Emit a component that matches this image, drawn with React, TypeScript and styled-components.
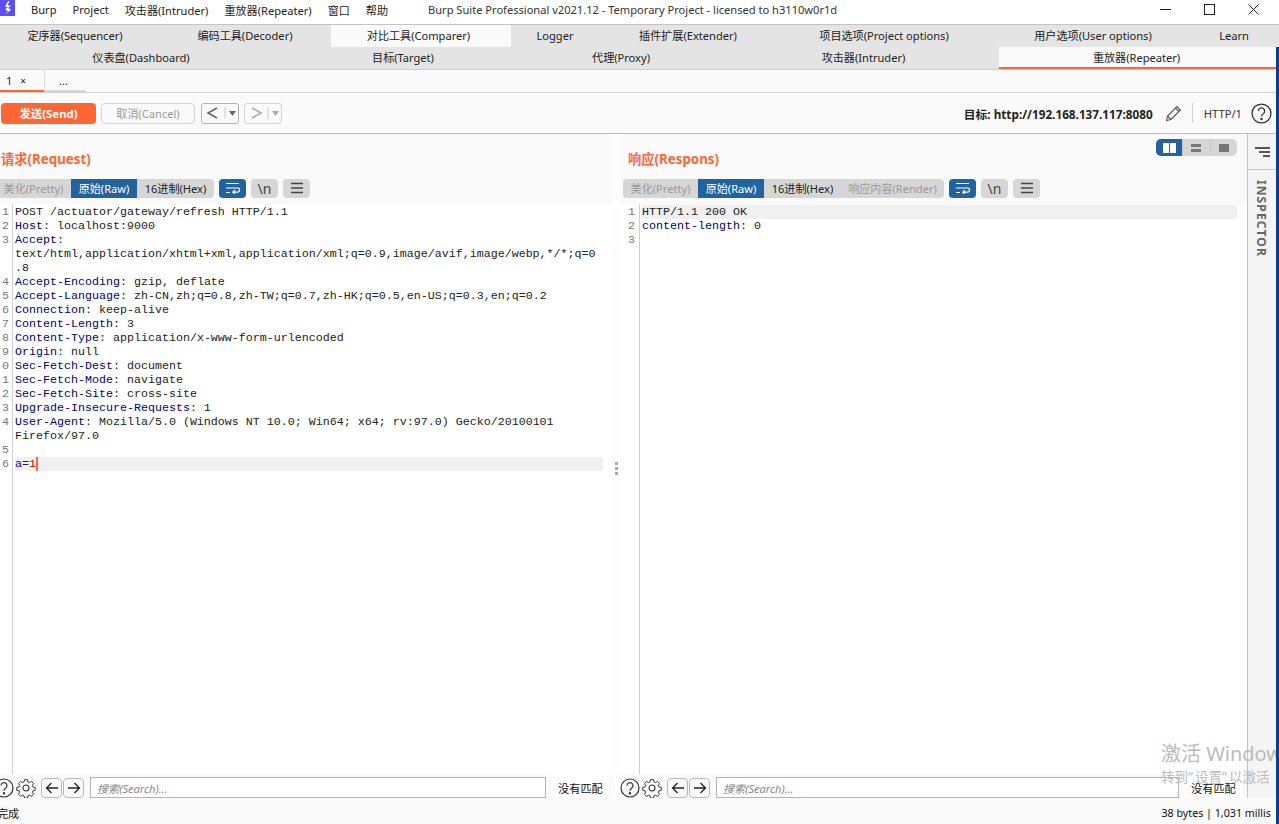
import React from "react";
import styled, { createGlobalStyle } from "styled-components";

const Global = createGlobalStyle`
  html, body { margin: 0; padding: 0; background: #fff; overflow: hidden; }
  * { box-sizing: border-box; }
  #root { width: 1279px; height: 824px; overflow: hidden; }
`;
const ui = `"Noto Sans", "Noto Sans CJK SC", sans-serif`;
const Page = styled.div`
  position: relative; width: 1279px; height: 824px; overflow: hidden;
  display: flex; flex-direction: column; font-family: ${ui}; font-size: 11.1px; color: #222; background: #fafafa;
`;
const TitleBar = styled.div`
  height: 25px; flex: none; background: #fff; border-bottom: 1px solid #c4c4c4; display: flex; align-items: flex-start; position: relative;
`;
const Logo = styled.div`width: 15px; height: 16px; flex: none; background: #5b4df0; display: flex; align-items: center; justify-content: center;`;
const Menu = styled.div`display: flex; margin: 2px 0 0 16px; gap: 16px; color: #222;`;
const AppTitle = styled.div`position: absolute; left: 428px; top: 2px; color: #333; white-space: nowrap;`;
const WindowButtons = styled.div`margin-left: auto; display: flex; padding: 4px 20px 0 0; gap: 33px; color: #222;`;
const TabRow = styled.div<{ $cols: string }>`
  height: 22px; flex: none; display: grid; grid-template-columns: ${p => p.$cols}; background: #e4e4e4;
`;
const MainTab = styled.div<{ $active?: boolean; $line?: boolean; $shift?: number }>`
  display: flex; align-items: center; justify-content: center; color: #222; white-space: nowrap;
  padding-bottom: 2px;
  padding-left: ${p => Math.max(p.$shift ?? 0, 0)}px;
  padding-right: ${p => Math.max(-(p.$shift ?? 0), 0)}px;
  background: ${p => (p.$active ? "#fafafa" : "transparent")};
  ${p => (p.$line ? "box-shadow: inset 0 -2px 0 #ff6633;" : "")}
`;
const SubTabs = styled.div`
  height: 24px; flex: none; border-top: 1px solid #cfcfcf; border-bottom: 1px solid #cfcfcf; background: #fafafa; display: flex;
`;
const SubTab = styled.div<{ $active?: boolean }>`
  width: ${p => (p.$active ? 45 : 41)}px; display: flex; align-items: center; color: #222; gap: 8px;
  height: 22px; padding-left: ${p => (p.$active ? 6 : 14)}px; padding-bottom: 1px;
  border-right: ${p => (p.$active ? "1px solid #dcdcdc" : "none")};
  box-shadow: inset 0 -2px 0 ${p => (p.$active ? "#ff6633" : "#d8d8d8")};
`;
const CloseMark = styled.span`font-size: 10px;`;
const Toolbar = styled.div`
  height: 41px; flex: none; display: flex; align-items: center; padding: 0 7px 0 1px; background: #fafafa; border-bottom: 1px solid #bdbdbd;
`;
const SendBtn = styled.div`
  width: 95px; height: 21px; background: #ff6633; color: #fff; font-weight: 700; font-size: 11.4px; border-radius: 4px; display: flex; align-items: center; justify-content: center;
`;
const CancelBtn = styled.div`
  width: 94px; height: 21px; margin-left: 5px; border: 1px solid #d4d4d4; border-radius: 4px; color: #999; display: flex; align-items: center; justify-content: center;
`;
const NavBtn = styled.div<{ $off?: boolean }>`
  width: 38px; height: 21px; margin-left: ${p => (p.$off ? 5 : 6)}px; border: 1px solid ${p => (p.$off ? "#d4d4d4" : "#b4b4b4")}; border-radius: 3px;
  display: flex; align-items: center;
`;
const Target = styled.div`margin-left: auto; font-size: 11.75px; font-weight: 700; color: #222; white-space: nowrap;`;
const PencilWrap = styled.span`display: flex; margin-left: 12px; flex: none;`;
const ToolSep = styled.div`width: 1px; height: 20px; background: #d0d0d0; margin: 0 11px 0 10px;`;
const Proto = styled.div`font-size: 11.2px; color: #333; margin-right: 9px;`;
const Work = styled.div`flex: 1; min-height: 0; display: flex; position: relative;`;
const Pane = styled.div<{ $w: number }>`position: relative; width: ${p => p.$w}px; flex: none; display: flex; flex-direction: column; background: #fafafa;`;
const PaneTitle = styled.div<{ $pad: number }>`
  height: 45px; flex: none; display: flex; align-items: center; padding-left: ${p => p.$pad}px; padding-top: 4px; color: #ff6633; font-weight: 700; font-size: 13.3px;
`;
const ViewRow = styled.div<{ $offset: number }>`height: 25px; flex: none; display: flex; align-items: flex-start; margin-left: ${p => p.$offset}px; gap: 5px;`;
const Seg = styled.div`height: 19px; display: flex; background: #d6d6d6; border-radius: 4px; overflow: hidden; flex: none;`;
const SegItem = styled.div<{ $w: number; $state: "on" | "off" | "dim" }>`
  width: ${p => p.$w}px; display: flex; align-items: center; justify-content: center; white-space: nowrap; padding-bottom: 1px;
  color: ${p => (p.$state === "on" ? "#fff" : p.$state === "dim" ? "#9a9a9a" : "#222")};
  background: ${p => (p.$state === "on" ? "#22629e" : "transparent")};
`;
const IconBtn = styled.div<{ $on?: boolean }>`
  width: 27px; height: 19px; border-radius: 4px; display: flex; align-items: center; justify-content: center; font-size: 14px; padding-bottom: 1px;
  background: ${p => (p.$on ? "#22629e" : "#d6d6d6")}; color: ${p => (p.$on ? "#fff" : "#444")};
`;
const Code = styled.div`flex: 1; min-height: 0; display: flex; background: #fff; overflow: hidden;`;
const Gutter = styled.div<{ $w: number; $pad: number }>`
  width: ${p => p.$w}px; flex: none; border-right: 1px solid #cfcfcf; padding-top: 1px; text-align: right; padding-right: ${p => p.$pad}px;
  font: 11.67px/14px "Liberation Mono", monospace; color: #777;
`;
const Lines = styled.div`flex: 1; min-width: 0; padding: 1px 0 0 2px; font: 11.67px/14px "Liberation Mono", monospace; color: #222;`;
const Line = styled.div<{ $on?: boolean; $end: number }>`
  height: 14px; white-space: pre; margin-right: ${p => p.$end}px; background: ${p => (p.$on ? "#f0f0f0" : "transparent")};
`;
const Key = styled.span`color: #000080;`;
const ParamKey = styled.span`color: #0000c0;`;
const Num = styled.span`color: #c00000;`;
const Caret = styled.span`display: inline-block; width: 2px; height: 14px; background: #ff6633; vertical-align: top;`;
const Divider = styled.div`width: 8px; flex: none; background: #fdfdfd; display: flex; flex-direction: column; align-items: center;`;
const Dots = styled.div`margin-top: 328px; display: flex; flex-direction: column; gap: 2px;`;
const Dot = styled.div`width: 3px; height: 3px; background: #aaa;`;
const SearchBar = styled.div`height: 24px; flex: none; display: flex; align-items: center; background: #fafafa; padding-top: 3px;`;
const HelpWrap = styled.span<{ $start: number }>`display: flex; margin-left: ${p => p.$start}px;`;
const GearWrap = styled.span`display: flex; margin: 0 5px 0 2px;`;
const SearchBtn = styled.div`width: 21px; height: 20px; flex: none; margin-right: 1px; border: 1px solid #b8b8b8; border-radius: 4px; display: flex; align-items: center; justify-content: center; color: #222;`;
const SearchInput = styled.div<{ $w: number }>`
  width: ${p => p.$w}px; height: 21px; flex: none; margin-left: 5px; border: 1px solid #b4b4b4; background: #fff; padding-left: 6px; font-style: italic; color: #888; display: flex; align-items: center;
`;
const NoMatch = styled.div`
  margin: -3px 0 0 5px; align-self: stretch; background: #fff; padding: 3px 6px 0 7px; color: #111; white-space: nowrap; display: flex; align-items: center; font-size: 11.2px;
`;
const LayoutSwitch = styled.div`position: absolute; right: 10px; top: 5px; height: 17px; width: 81px; display: flex; border-radius: 5px; overflow: hidden; background: #d6d6d6;`;
const LayoutItem = styled.div<{ $on?: boolean }>`
  flex: 1; display: flex; align-items: center; justify-content: center; border-right: 1px solid #c8c8c8; background: ${p => (p.$on ? "#22629e" : "transparent")};
  &:last-child { border-right: none; }
`;
const Inspector = styled.div`width: 32px; flex: none; border-left: 1px solid #c4c4c4; background: #f4f4f4; display: flex; flex-direction: column;`;
const InspectorIcon = styled.div`height: 36px; flex: none; border-bottom: 1px solid #c8c8c8; display: flex; align-items: center; justify-content: center; padding-right: 2px;`;
const InspectorLabel = styled.div`writing-mode: vertical-rl; align-self: flex-start; font-size: 12px; font-weight: 700; color: #666; margin: 10px 0 0 5px; letter-spacing: 1.1px;`;
const StatusBar = styled.div`height: 26px; flex: none; display: flex; align-items: center; justify-content: space-between; background: #fafafa; padding: 3px 8px 0 0; color: #111;`;
const StatusLeft = styled.div`margin-left: -3px;`;
const StatusRight = styled.div`font-size: 10.7px;`;
const Watermark = styled.div`position: absolute; left: 1161px; top: 741px; color: #bbb; font-size: 20px; line-height: 26px; white-space: nowrap; pointer-events: none;`;
const WatermarkSub = styled.div`font-size: 13.5px; line-height: 18px; margin-top: 1px;`;
const Quote = styled.span`display: inline-block; width: 7px;`;
const Edge = styled.div`position: absolute; right: 0; top: 47px; bottom: 0; width: 3px; background: #0f3d8c;`;

const Help = ({ size = 18 }: { size?: number }) => (
  <svg width={size} height={size} viewBox="0 0 20 20" fill="none" stroke="#333" strokeWidth="1.2">
    <circle cx="10" cy="10" r="9" />
    <path d="M7 7.6a3 3 0 1 1 4.6 2.6c-1 .6-1.6 1.2-1.6 2.6" />
    <circle cx="10" cy="15.3" r=".6" fill="#333" />
  </svg>
);
const Gear = () => (
  <svg width="20" height="20" viewBox="0 0 24 24" fill="none" stroke="#333" strokeWidth="1.3" strokeLinejoin="round">
    <path d="M10 2h4l.6 3 2 .9 2.6-1.6 2.8 2.8-1.6 2.6.9 2 3 .6v4l-3 .6-.9 2 1.6 2.6-2.8 2.8-2.6-1.6-2 .9-.6 3h-4l-.6-3-2-.9-2.6 1.6-2.8-2.8 1.6-2.6-.9-2-3-.6v-4l3-.6.9-2-1.6-2.6 2.8-2.8 2.6 1.6 2-.9z" transform="translate(1.2 0.2) scale(.9)" />
    <circle cx="12" cy="12" r="3.6" />
  </svg>
);
const ArrowL = () => (
  <svg width="14" height="12" viewBox="0 0 14 12" fill="none" stroke="#222" strokeWidth="1.3"><path d="M13 6H1.5M6.5 1 1.5 6l5 5" /></svg>
);
const ArrowR = () => (
  <svg width="14" height="12" viewBox="0 0 14 12" fill="none" stroke="#222" strokeWidth="1.3"><path d="M1 6h11.5M7.5 1l5 5-5 5" /></svg>
);
const Wrap = () => (
  <svg width="15" height="12" viewBox="0 0 15 12" fill="none" stroke="#fff" strokeWidth="1.2"><path d="M1 1.5h13M1 6h11.5a2 2 0 0 1 0 4.2H8M10 8l-2.2 2.2L10 12M1 10.5h4" /></svg>
);
const Bars = () => (
  <svg width="14" height="12" viewBox="0 0 14 12" fill="none" stroke="#444" strokeWidth="1.4"><path d="M1 1.5h12M1 6h12M1 10.5h12" /></svg>
);
const Chevron = ({ dir, color }: { dir: "l" | "r"; color: string }) => (
  <svg width="22" height="14" viewBox="0 0 22 14" fill="none" stroke={color} strokeWidth="1.6" style={{ flex: "none" }}>
    <path d={dir === "l" ? "M15 2 6 7l9 5" : "M7 2l9 5-9 5"} />
  </svg>
);
const NavRest = ({ color }: { color: string }) => (
  <svg width="14" height="14" viewBox="0 0 14 14" style={{ flex: "none" }}>
    <path d="M1 1v12" stroke="#ccc" />
    <path d="M5 5h7l-3.5 5z" fill={color} />
  </svg>
);
const Pencil = () => (
  <svg width="17" height="17" viewBox="0 0 17 17" fill="none" stroke="#555" strokeWidth="1.1">
    <path d="M1.5 15.5l1-4.5L12 1.5l3.5 3.5L6 14.5zM2.5 11 6 14.5M10.5 3l3.5 3.5" />
  </svg>
);
const Bolt = () => (
  <svg width="9" height="14" viewBox="0 0 9 14"><path d="M5 0 2 6h3L2 8.5l3 1.5-3 4 6-5.5-3-1.5 3-2.5H4.5L6.5 0z" fill="#fff" /></svg>
);

type SegDef = { t: string; w: number; s: "on" | "off" | "dim" };
const reqSeg: SegDef[] = [
  { t: "美化(Pretty)", w: 75, s: "dim" }, { t: "原始(Raw)", w: 66, s: "on" }, { t: "16进制(Hex)", w: 77, s: "off" },
];
const resSeg: SegDef[] = [
  { t: "美化(Pretty)", w: 75, s: "dim" }, { t: "原始(Raw)", w: 66, s: "on" }, { t: "16进制(Hex)", w: 77, s: "off" }, { t: "响应内容(Render)", w: 103, s: "dim" },
];
const Views = ({ items, offset }: { items: SegDef[]; offset: number }) => (
  <ViewRow $offset={offset}>
    <Seg>{items.map(i => <SegItem key={i.t} $w={i.w} $state={i.s}>{i.t}</SegItem>)}</Seg>
    <IconBtn $on><Wrap /></IconBtn>
    <IconBtn>\n</IconBtn>
    <IconBtn><Bars /></IconBtn>
  </ViewRow>
);
const Search = ({ w, start }: { w: number; start: number }) => (
  <SearchBar>
    <HelpWrap $start={start}><Help size={20} /></HelpWrap>
    <GearWrap><Gear /></GearWrap>
    <SearchBtn><ArrowL /></SearchBtn>
    <SearchBtn><ArrowR /></SearchBtn>
    <SearchInput $w={w}>搜索(Search)...</SearchInput>
    <NoMatch>没有匹配</NoMatch>
  </SearchBar>
);

const reqLines: { n?: number; k?: string; v: React.ReactNode; on?: boolean }[] = [
  { n: 1, v: "POST /actuator/gateway/refresh HTTP/1.1" },
  { n: 2, k: "Host", v: ": localhost:9000" },
  { n: 3, k: "Accept", v: ":" },
  { v: "text/html,application/xhtml+xml,application/xml;q=0.9,image/avif,image/webp,*/*;q=0" },
  { v: ".8" },
  { n: 4, k: "Accept-Encoding", v: ": gzip, deflate" },
  { n: 5, k: "Accept-Language", v: ": zh-CN,zh;q=0.8,zh-TW;q=0.7,zh-HK;q=0.5,en-US;q=0.3,en;q=0.2" },
  { n: 6, k: "Connection", v: ": keep-alive" },
  { n: 7, k: "Content-Length", v: ": 3" },
  { n: 8, k: "Content-Type", v: ": application/x-www-form-urlencoded" },
  { n: 9, k: "Origin", v: ": null" },
  { n: 0, k: "Sec-Fetch-Dest", v: ": document" },
  { n: 1, k: "Sec-Fetch-Mode", v: ": navigate" },
  { n: 2, k: "Sec-Fetch-Site", v: ": cross-site" },
  { n: 3, k: "Upgrade-Insecure-Requests", v: ": 1" },
  { n: 4, k: "User-Agent", v: ": Mozilla/5.0 (Windows NT 10.0; Win64; x64; rv:97.0) Gecko/20100101" },
  { v: "Firefox/97.0" },
  { n: 5, v: "" },
  { n: 6, on: true, v: <><ParamKey>a</ParamKey>=<Num>1</Num><Caret /></> },
];
const row1: { t: string; a?: boolean; s?: number }[] = [
  { t: "定序器(Sequencer)" }, { t: "编码工具(Decoder)", s: 9 }, { t: "对比工具(Comparer)", a: true, s: -5 }, { t: "Logger" },
  { t: "插件扩展(Extender)" }, { t: "项目选项(Project options)" }, { t: "用户选项(User options)" }, { t: "Learn", s: -6 },
];

export default function App() {
  return (
    <Page>
      <Global />
      <TitleBar>
        <Logo><Bolt /></Logo>
        <Menu>
          <span>Burp</span><span>Project</span><span>攻击器(Intruder)</span><span>重放器(Repeater)</span><span>窗口</span><span>帮助</span>
        </Menu>
        <AppTitle>Burp Suite Professional v2021.12 - Temporary Project - licensed to h3110w0r1d</AppTitle>
        <WindowButtons>
          <svg width="11" height="11" viewBox="0 0 11 11"><path d="M0 5.5h11" stroke="#222" /></svg>
          <svg width="11" height="11" viewBox="0 0 11 11"><rect x=".5" y=".5" width="10" height="10" fill="none" stroke="#222" /></svg>
          <svg width="11" height="11" viewBox="0 0 11 11"><path d="M.5.5l10 10M10.5.5l-10 10" stroke="#222" /></svg>
        </WindowButtons>
      </TitleBar>
      <TabRow $cols="150px 181px 180px 88px 178px 214px 204px 84px">
        {row1.map(r => <MainTab key={r.t} $active={r.a} $shift={r.s}>{r.t}</MainTab>)}
      </TabRow>
      <TabRow $cols="282px 242px 194px 281px 280px">
        <MainTab>仪表盘(Dashboard)</MainTab>
        <MainTab>目标(Target)</MainTab>
        <MainTab>代理(Proxy)</MainTab>
        <MainTab $shift={10}>攻击器(Intruder)</MainTab>
        <MainTab $active $line $shift={-5}>重放器(Repeater)</MainTab>
      </TabRow>
      <SubTabs>
        <SubTab $active><span>1</span><CloseMark>×</CloseMark></SubTab>
        <SubTab>...</SubTab>
      </SubTabs>
      <Toolbar>
        <SendBtn>发送(Send)</SendBtn>
        <CancelBtn>取消(Cancel)</CancelBtn>
        <NavBtn><Chevron dir="l" color="#666" /><NavRest color="#666" /></NavBtn>
        <NavBtn $off><Chevron dir="r" color="#aaa" /><NavRest color="#aaa" /></NavBtn>
        <Target>目标: http://192.168.137.117:8080</Target>
        <PencilWrap><Pencil /></PencilWrap>
        <ToolSep />
        <Proto>HTTP/1</Proto>
        <Help size={21} />
      </Toolbar>
      <Work>
        <Pane $w={612}>
          <PaneTitle $pad={1}>请求(Request)</PaneTitle>
          <Views items={reqSeg} offset={-4} />
          <Code>
            <Gutter $w={13} $pad={3}>
              {reqLines.map((l, i) => <Line key={i} $end={0}>{l.n ?? " "}</Line>)}
            </Gutter>
            <Lines>
              {reqLines.map((l, i) => <Line key={i} $on={l.on} $end={9}>{l.k ? <Key>{l.k}</Key> : null}{l.v}</Line>)}
            </Lines>
          </Code>
          <Search w={456} start={-6} />
        </Pane>
        <Divider><Dots><Dot /><Dot /><Dot /></Dots></Divider>
        <Pane $w={627}>
          <PaneTitle $pad={8}>响应(Respons)</PaneTitle>
          <Views items={resSeg} offset={3} />
          <Code>
            <Gutter $w={20} $pad={4}>
              <Line $end={0}>1</Line><Line $end={0}>2</Line><Line $end={0}>3</Line>
            </Gutter>
            <Lines>
              <Line $on $end={10}>HTTP/1.1 200 OK</Line>
              <Line $end={10}><Key>content-length</Key>: 0</Line>
            </Lines>
          </Code>
          <Search w={463} start={0} />
          <LayoutSwitch>
            <LayoutItem $on><svg width="13" height="10" viewBox="0 0 13 10"><path d="M0 0h6v10H0zM7 0h6v10H7z" fill="#fff" /></svg></LayoutItem>
            <LayoutItem><svg width="10" height="8" viewBox="0 0 10 8"><path d="M0 0h10v3H0zM0 5h10v3H0z" fill="#777" /></svg></LayoutItem>
            <LayoutItem><svg width="10" height="8" viewBox="0 0 10 8"><path d="M0 0h10v8H0z" fill="#777" /></svg></LayoutItem>
          </LayoutSwitch>
        </Pane>
        <Inspector>
          <InspectorIcon><svg width="15" height="10" viewBox="0 0 15 10" fill="none" stroke="#222" strokeWidth="1.4"><path d="M0 1h15M4 5h11M8 9h7" /></svg></InspectorIcon>
          <InspectorLabel>INSPECTOR</InspectorLabel>
        </Inspector>
      </Work>
      <StatusBar>
        <StatusLeft>完成</StatusLeft>
        <StatusRight>38 bytes | 1,031 millis</StatusRight>
      </StatusBar>
      <Watermark>激活 Windows<WatermarkSub>转到<Quote>“</Quote>设置<Quote>”</Quote>以激活</WatermarkSub></Watermark>
      <Edge />
    </Page>
  );
}
